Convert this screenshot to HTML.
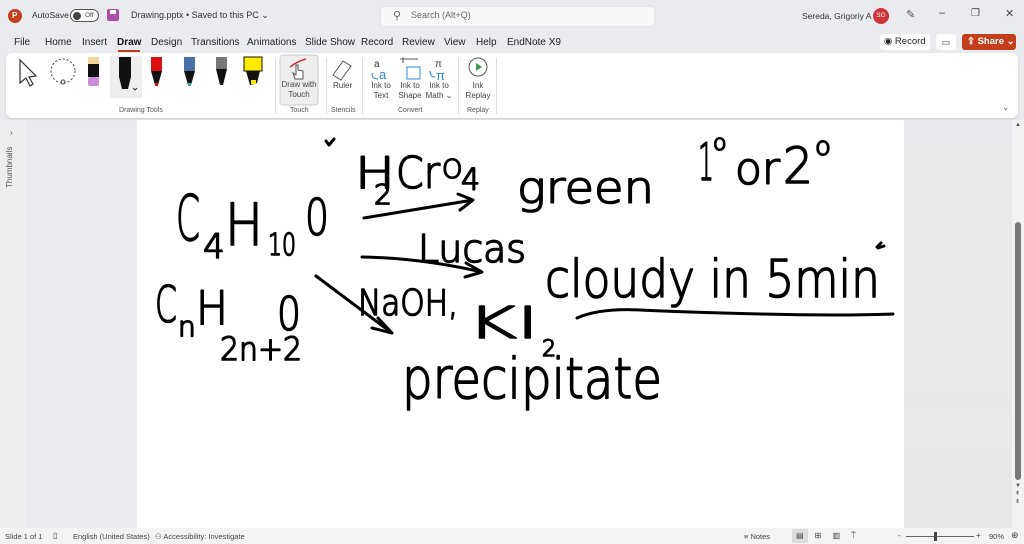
<!DOCTYPE html>
<html><head><meta charset="utf-8"><style>
*{margin:0;padding:0;box-sizing:border-box}
body{width:1024px;height:544px;overflow:hidden;background:#e9ebee;font-family:"Liberation Sans",sans-serif;position:relative;color:#222}
.a{position:absolute;white-space:nowrap}
.t{font-size:11px;color:#333}
.tab{font-size:10px;color:#222;top:37px}
.lbl{font-size:8px;color:#444;text-align:center;white-space:normal}
.grp{font-size:7px;color:#555;top:107px}
.sep{position:absolute;top:58px;width:1px;height:56px;background:#ddd}
.hw{font-family:"DejaVu Sans","Liberation Sans",sans-serif;font-weight:200}
.hw text{stroke:#000;stroke-width:1.6;stroke-linejoin:round}
</style></head><body>
<!-- title bar -->
<div class="a" style="left:8px;top:9px;width:14px;height:14px;border-radius:50%;background:#c43e1c"></div>
<div class="a" style="left:12px;top:11px;font-size:8px;color:#fff;font-weight:bold">P</div>
<div class="a t" style="left:32px;top:10px;font-size:8.5px">AutoSave</div>
<div class="a" style="left:70px;top:9px;width:29px;height:13px;border:1px solid #555;border-radius:7px;background:#fff"></div>
<div class="a" style="left:73px;top:12px;width:8px;height:8px;border-radius:50%;background:#444"></div>
<div class="a" style="left:85px;top:12px;font-size:6.5px;color:#444">Off</div>
<div class="a" style="left:107px;top:9px;width:12px;height:12px;background:#b04fa8;border-radius:2px"></div>
<div class="a" style="left:110px;top:10px;width:6px;height:4px;background:#fff"></div>
<div class="a t" style="left:131px;top:10px;font-size:9px">Drawing.pptx • Saved to this PC ⌄</div>
<div class="a" style="left:380px;top:6px;width:275px;height:21px;background:#f7f8f9;border-radius:4px;border:1px solid #e2e4e6"></div>
<div class="a" style="left:393px;top:9px;font-size:11px;color:#666">⚲</div>
<div class="a" style="left:411px;top:10px;font-size:9px;color:#666">Search (Alt+Q)</div>
<div class="a t" style="left:802px;top:11px;font-size:8.5px">Sereda, Grigoriy A</div>
<div class="a" style="left:873px;top:8px;width:16px;height:16px;border-radius:50%;background:#d13438;color:#fff;font-size:6.5px;text-align:center;line-height:16px">SG</div>
<div class="a" style="left:906px;top:8px;font-size:11px;color:#555">✎</div>
<div class="a" style="left:939px;top:7px;font-size:11px;color:#444">–</div>
<div class="a" style="left:971px;top:8px;font-size:10px;color:#444">❐</div>
<div class="a" style="left:1005px;top:7px;font-size:11px;color:#444">✕</div>
<!-- tabs -->
<div class="a tab" style="left:14px">File</div>
<div class="a tab" style="left:45px">Home</div>
<div class="a tab" style="left:82px">Insert</div>
<div class="a tab" style="left:117px;font-weight:bold;color:#111">Draw</div>
<div class="a" style="left:118px;top:50px;width:22px;height:2px;background:#c43e1c"></div>
<div class="a tab" style="left:151px">Design</div>
<div class="a tab" style="left:191px">Transitions</div>
<div class="a tab" style="left:247px">Animations</div>
<div class="a tab" style="left:305px">Slide Show</div>
<div class="a tab" style="left:361px">Record</div>
<div class="a tab" style="left:402px">Review</div>
<div class="a tab" style="left:444px">View</div>
<div class="a tab" style="left:476px">Help</div>
<div class="a tab" style="left:507px">EndNote X9</div>
<div class="a" style="left:880px;top:34px;width:50px;height:16px;background:#fff;border-radius:3px;font-size:9.5px;line-height:16px;padding-left:4px">◉ Record</div>
<div class="a" style="left:936px;top:34px;width:20px;height:16px;background:#fff;border-radius:3px;font-size:9px;text-align:center;line-height:16px;color:#444">▭</div>
<div class="a" style="left:962px;top:34px;width:54px;height:16px;background:#c43e1c;border-radius:3px;font-size:9.5px;color:#fff;font-weight:bold;line-height:16px;padding-left:5px">⇪ Share ⌄</div>
<!-- ribbon -->
<div class="a" style="left:6px;top:53px;width:1012px;height:65px;background:#fff;border-radius:6px;box-shadow:0 1px 2px rgba(0,0,0,.15)"></div>
<svg class="a" style="left:0;top:53px" width="510" height="60">
<path d="M20 7 L20 30 L26 25 L30 33 L33 31 L29 24 L36 23 Z" fill="#fff" stroke="#333" stroke-width="1.2"/>
<circle cx="63" cy="18" r="12" fill="none" stroke="#444" stroke-dasharray="2 2"/>
<circle cx="63" cy="29" r="2" fill="none" stroke="#444"/>
<rect x="88" y="4" width="11" height="7" fill="#f2d59a"/><rect x="88" y="11" width="11" height="13" fill="#111"/><rect x="88" y="24" width="11" height="9" fill="#c98fd8" rx="2"/>
<rect x="110" y="3" width="32" height="42" fill="#eee"/>
<rect x="119" y="4" width="12" height="20" fill="#111"/><path d="M119 24 L131 24 L128 36 L122 36 Z" fill="#111"/><path d="M133 35 l2 2 l2 -2" stroke="#333" fill="none"/>
<rect x="151" y="4" width="11" height="14" fill="#d11" /><path d="M151 18 L162 18 L158 32 L155 32 Z" fill="#111"/><rect x="155" y="30" width="3" height="3" fill="#d11"/>
<rect x="184" y="4" width="11" height="14" fill="#4a70a8"/><path d="M184 18 L195 18 L191 32 L188 32 Z" fill="#111"/><rect x="188" y="30" width="3" height="3" fill="#3aa"/>
<rect x="216" y="4" width="11" height="12" fill="#777"/><path d="M216 16 L227 16 L223 32 L220 32 Z" fill="#111"/>
<rect x="244" y="4" width="18" height="14" fill="#ffea00" stroke="#111"/><path d="M246 18 L260 18 L257 30 L250 32 Z" fill="#111"/><rect x="251" y="27" width="5" height="4" fill="#ffea00"/>
<rect x="280" y="2" width="38" height="50" fill="#eee" stroke="#ccc" rx="3"/>
<path d="M290 14 q8 -6 16 -8" stroke="#d13438" fill="none" stroke-width="1.5"/>
<path d="M296 12 v10 l-3 -2 l2 6 h8 v-8 l-5 -1 v-5 z" fill="#fff" stroke="#555"/>
<path d="M333 22 l10 -14 l8 5 l-10 14 z" fill="none" stroke="#555"/>
<text x="374" y="14" font-size="10" fill="#333">a</text><path d="M372 20 q0 6 6 6" stroke="#2b88d8" fill="none"/><text x="379" y="26" font-size="13" fill="#2b88d8">a</text>
<rect x="407" y="14" width="13" height="12" fill="none" stroke="#2b88d8"/><path d="M400 6 h18 M403 4 v6" stroke="#555" fill="none"/>
<text x="435" y="14" font-size="10" fill="#333">π</text><text x="436" y="27" font-size="13" fill="#2b88d8">π</text><path d="M430 18 q0 6 5 6" stroke="#2b88d8" fill="none"/>
<circle cx="478" cy="14" r="9" fill="none" stroke="#555"/><path d="M476 10 l6 4 l-6 4 z" fill="#3a9a4a"/>
</svg>
<div class="a lbl" style="left:280px;top:80px;width:38px;line-height:10px">Draw with Touch</div>
<div class="a lbl" style="left:333px;top:81px">Ruler</div>
<div class="a lbl" style="left:368px;top:81px;width:26px;line-height:10px">Ink to Text</div>
<div class="a lbl" style="left:396px;top:81px;width:28px;line-height:10px">Ink to Shape</div>
<div class="a lbl" style="left:425px;top:81px;width:28px;line-height:10px">Ink to Math ⌄</div>
<div class="a lbl" style="left:464px;top:81px;width:28px;line-height:10px">Ink Replay</div>
<div class="a grp" style="left:119px">Drawing Tools</div>
<div class="a grp" style="left:290px">Touch</div>
<div class="a grp" style="left:331px">Stencils</div>
<div class="a grp" style="left:398px">Convert</div>
<div class="a grp" style="left:467px">Replay</div>
<div class="sep" style="left:275px"></div><div class="sep" style="left:326px"></div><div class="sep" style="left:362px"></div><div class="sep" style="left:458px"></div><div class="sep" style="left:496px"></div>
<div class="a" style="left:1002px;top:102px;font-size:9px;color:#555">⌄</div>
<!-- left panel -->
<div class="a" style="left:0;top:120px;width:26px;height:408px;background:#eceef0"></div>
<div class="a" style="left:10px;top:128px;font-size:8px;color:#555">›</div>
<div class="a" style="left:5px;top:188px;font-size:8px;color:#555;transform:rotate(-90deg);transform-origin:left top">Thumbnails</div>
<!-- right gray -->
<div class="a" style="left:904px;top:120px;width:108px;height:408px;background:linear-gradient(#e8eaed,#eae8e6)"></div>
<div class="a" style="left:1012px;top:120px;width:12px;height:408px;background:#f2f2f2"></div>
<div class="a" style="left:1015px;top:222px;width:6px;height:258px;background:#777;border-radius:3px"></div>
<div class="a" style="left:1015px;top:122px;font-size:6px;color:#555">▲</div>
<div class="a" style="left:1015px;top:482px;font-size:6px;color:#555;line-height:8px">▼<br>⇞<br>⇟</div>
<!-- slide -->
<div class="a" style="left:137px;top:120px;width:767px;height:408px;background:#fff"></div>
<svg class="a hw" style="left:0;top:0" width="1024" height="544" fill="#000">
<g fill="none" stroke="#000" stroke-width="3" stroke-linecap="round" stroke-linejoin="round">
<path d="M364 218 L473 200 M458 194 L473 200 L460 210"/>
<path d="M362 257 Q420 258 482 272 M466 263 L482 272 L465 277"/>
<path d="M316 276 L392 333 M378 318 L392 333 L372 328"/>
<path d="M577 318 Q600 308 640 310 T760 314 T893 314"/>
<path d="M326 141 l3 4 l5 -6 M877 247 l4 -4 M878 248 l6 -2"/>
</g>
<text x="176" y="240" font-size="62" textLength="24" lengthAdjust="spacingAndGlyphs">C</text>
<text x="203" y="258" font-size="34">4</text>
<text x="225" y="245" font-size="58" textLength="38" lengthAdjust="spacingAndGlyphs">H</text>
<text x="268" y="255" font-size="30" textLength="28" lengthAdjust="spacingAndGlyphs">10</text>
<text x="305" y="235" font-size="50" textLength="24" lengthAdjust="spacingAndGlyphs">0</text>
<text x="355" y="188" font-size="44" textLength="40" lengthAdjust="spacingAndGlyphs">H</text>
<text x="374" y="204" font-size="28">2</text>
<text x="396" y="188" font-size="44" textLength="44" lengthAdjust="spacingAndGlyphs">Cr</text>
<text x="442" y="178" font-size="26">O</text>
<text x="461" y="190" font-size="30">4</text>
<text x="517" y="203" font-size="44" textLength="137" lengthAdjust="spacingAndGlyphs">green</text>
<text x="698" y="180" font-size="52" textLength="16" lengthAdjust="spacingAndGlyphs">1</text>
<text x="713" y="150" font-size="22">o</text>
<text x="735" y="184" font-size="44" textLength="45" lengthAdjust="spacingAndGlyphs">or</text>
<text x="783" y="183" font-size="50" textLength="30" lengthAdjust="spacingAndGlyphs">2</text>
<text x="815" y="155" font-size="26">o</text>
<text x="418" y="262" font-size="38" textLength="108" lengthAdjust="spacingAndGlyphs">Lucas</text>
<text x="545" y="297" font-size="52" textLength="335" lengthAdjust="spacingAndGlyphs">cloudy in 5min</text>
<text x="155" y="322" font-size="50" textLength="22" lengthAdjust="spacingAndGlyphs">C</text>
<text x="178" y="336" font-size="28">n</text>
<text x="196" y="324" font-size="46" textLength="32" lengthAdjust="spacingAndGlyphs">H</text>
<text x="220" y="360" font-size="32" textLength="82" lengthAdjust="spacingAndGlyphs">2n+2</text>
<text x="277" y="330" font-size="46" textLength="24" lengthAdjust="spacingAndGlyphs">0</text>
<text x="358" y="315" font-size="36" textLength="100" lengthAdjust="spacingAndGlyphs">NaOH,</text>
<text x="467" y="338" font-size="44" textLength="72" lengthAdjust="spacingAndGlyphs">KI</text>
<text x="542" y="356" font-size="22">2</text>
<text x="402" y="398" font-size="56" textLength="260" lengthAdjust="spacingAndGlyphs">precipitate</text>
</svg>
<!-- status bar -->
<div class="a" style="left:0;top:528px;width:1024px;height:16px;background:#f3f3f3"></div>
<div class="a" style="left:5px;top:532px;font-size:7.5px;color:#444">Slide 1 of 1</div>
<div class="a" style="left:53px;top:531px;font-size:8px;color:#444">▯</div>
<div class="a" style="left:73px;top:532px;font-size:7.5px;color:#444">English (United States)</div>
<div class="a" style="left:155px;top:532px;font-size:7.5px;color:#444">⚇ Accessibility: Investigate</div>
<div class="a" style="left:744px;top:532px;font-size:7.5px;color:#444">≡ Notes</div>
<div class="a" style="left:792px;top:529px;width:16px;height:14px;background:#ddd"></div>
<div class="a" style="left:796px;top:531px;font-size:8px;color:#444">▤&nbsp;&nbsp;&nbsp;&nbsp;&nbsp;⊞&nbsp;&nbsp;&nbsp;&nbsp;&nbsp;▥&nbsp;&nbsp;&nbsp;&nbsp;&nbsp;⍑</div>
<div class="a" style="left:898px;top:531px;font-size:8px;color:#444">-</div>
<div class="a" style="left:906px;top:536px;width:68px;height:1px;background:#666"></div>
<div class="a" style="left:934px;top:532px;width:3px;height:9px;background:#444"></div>
<div class="a" style="left:976px;top:531px;font-size:8px;color:#444">+</div>
<div class="a" style="left:989px;top:532px;font-size:7.5px;color:#444">90%</div>
<div class="a" style="left:1011px;top:530px;font-size:9px;color:#444">⊕</div>
</body></html>
